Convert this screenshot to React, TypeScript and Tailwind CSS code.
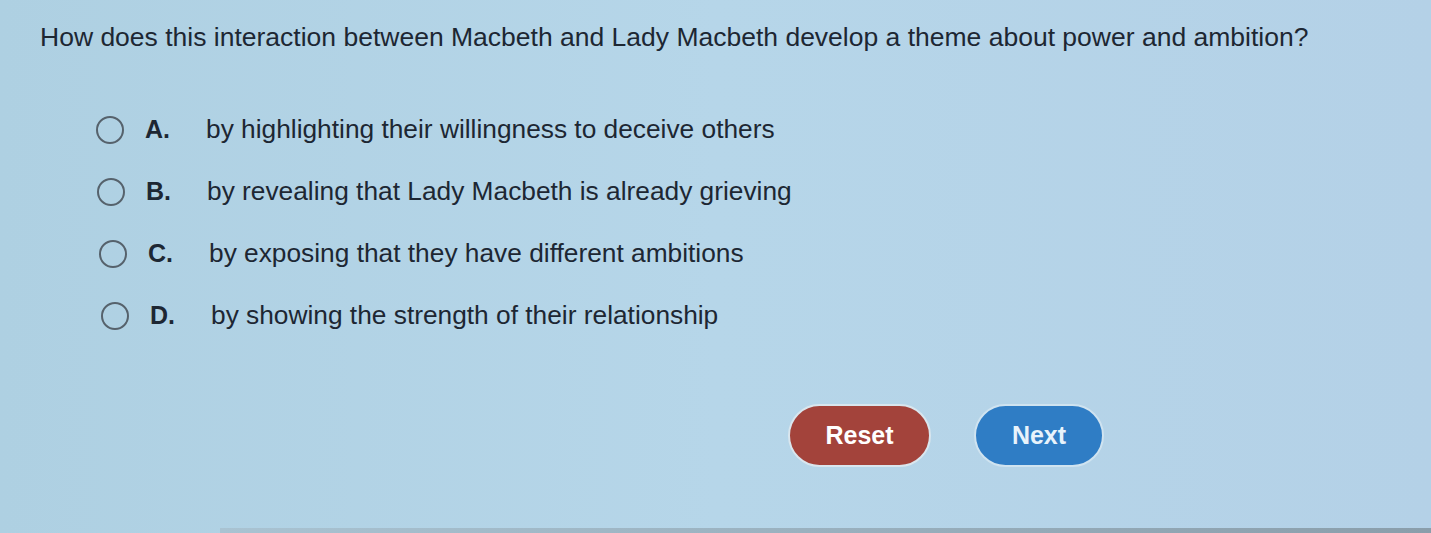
import React from "react";

const options = [
  { key: "A.", text: "by highlighting their willingness to deceive others", shift: "ml-[96px]" },
  { key: "B.", text: "by revealing that Lady Macbeth is already grieving", shift: "ml-[97px]" },
  { key: "C.", text: "by exposing that they have different ambitions", shift: "ml-[99px]" },
  { key: "D.", text: "by showing the strength of their relationship", shift: "ml-[101px]" },
];

export default function App() {
  return (
    <div
      className="relative w-full h-[533px] overflow-hidden bg-gradient-to-r from-[#aed0e2] via-[#b6d6e9] to-[#b4d1e7] text-[#1d2733]"
      style={{ fontFamily: '"Liberation Sans", Arial, sans-serif' }}
    >
      <div className="flex flex-col">
        <h1 className="pl-[40px] pt-[22px] text-[26.5px] leading-[30px] font-normal">
          How does this interaction between Macbeth and Lady Macbeth develop a theme about power and ambition?
        </h1>

        <ul className="mt-[64px] flex flex-col gap-[34px]">
          {options.map((o) => (
            <li key={o.key} className={`flex items-center h-[28px] ${o.shift}`}>
              <span className="w-[28px] h-[28px] rounded-full border-[2.5px] border-[#56626c] shrink-0" />
              <span className="ml-[21px] w-[61px] text-[25px] font-bold">{o.key}</span>
              <span className="text-[26.3px]">{o.text}</span>
            </li>
          ))}
        </ul>

        <div className="mt-[74px] flex ml-[788px] gap-[43px] items-center">
          <button className="w-[143px] h-[63px] rounded-full bg-[#a3433b] border-2 border-[#d9e6ee] text-white text-[25px] font-bold">
            Reset
          </button>
          <button className="w-[130px] h-[63px] rounded-full bg-[#2f7dc5] border-2 border-[#cfe3f0] text-[#e8f3fb] text-[25px] font-bold">
            Next
          </button>
        </div>
      </div>

      <div className="absolute left-[220px] right-0 bottom-0 h-[5px] bg-gradient-to-r from-[#a9c3d2] to-[#8a9eab]" />
    </div>
  );
}
